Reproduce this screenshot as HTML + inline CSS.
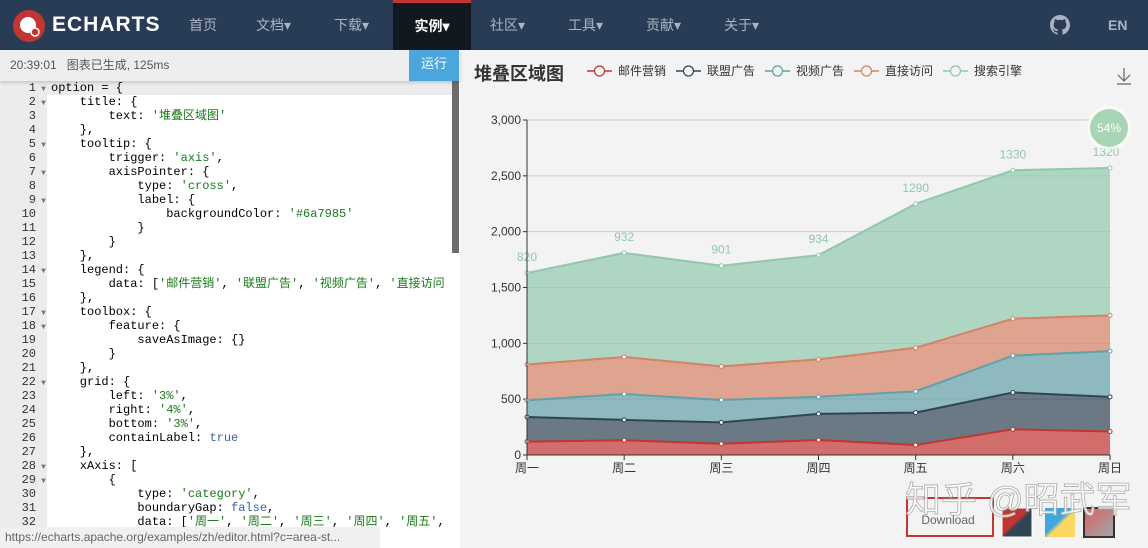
<!DOCTYPE html>
<html><head><meta charset="utf-8">
<style>
*{margin:0;padding:0;box-sizing:border-box}
body{width:1148px;height:548px;overflow:hidden;background:#f3f3f3;font-family:"Liberation Sans","Noto Sans CJK SC",sans-serif;position:relative}
#nav{position:absolute;left:0;top:0;width:1148px;height:50px;background:#293c55;color:#aab3bf;font-size:14px}
#nav .it{position:absolute;top:0;height:50px;line-height:50px}
#nav .act{background:#111820;color:#fff;font-weight:bold;left:393px;width:78px;text-align:center;border-top:3px solid #c23531;line-height:47px}
#left{position:absolute;left:0;top:50px;width:460px;height:498px;background:#fff}
#status{position:absolute;left:0;top:0;width:460px;height:31px;background:#eeeeee;font-size:12px;color:#555;line-height:31px;padding-left:10px;box-shadow:0 2px 3px rgba(0,0,0,.15)}
#run{position:absolute;left:409px;top:0;width:50px;height:31px;background:#4aa6dc;color:#fff;text-align:center;line-height:28px;font-size:13px}
#gut{position:absolute;left:0;top:31px;width:47px;height:467px;background:#ececec}
#code{position:absolute;left:0;top:31px;font-family:"Liberation Mono","Noto Sans CJK SC",monospace;font-size:12px;color:#000;white-space:pre}
#code div{height:14px;line-height:14px;overflow:visible}
.ln{display:inline-block;width:36px;text-align:right;color:#333;padding-right:0}
.ar{display:inline-block;width:15px;color:#777;font-size:8px;text-align:center}
.s{color:#1a7a1a}.b{color:#3a5fa6}
#hl{position:absolute;left:47px;top:31px;width:405px;height:14px;background:#ececec}
#sb{position:absolute;left:452px;top:31px;width:7px;height:172px;background:#6c6c6c}
#url{position:absolute;left:0;top:477px;width:380px;height:21px;background:#f0f0f0;font-size:12px;color:#666;line-height:21px;padding-left:5px}
</style></head><body>
<div id="nav">
<svg style="position:absolute;left:12px;top:9px" width="34" height="34"><circle cx="17" cy="17" r="16" fill="#c23531"/><circle cx="16" cy="16" r="8" fill="#fff"/><circle cx="23" cy="23" r="4" fill="#c23531" stroke="#fff" stroke-width="1.5"/></svg>
<div class="it" style="left:52px;color:#fff;font-size:21px;font-weight:bold;letter-spacing:1px">ECHARTS</div>
<div class="it" style="left:189px">首页</div>
<div class="it" style="left:256px">文档▾</div>
<div class="it" style="left:334px">下载▾</div>
<div class="it act">实例▾</div>
<div class="it" style="left:490px">社区▾</div>
<div class="it" style="left:568px">工具▾</div>
<div class="it" style="left:646px">贡献▾</div>
<div class="it" style="left:724px">关于▾</div>
<svg style="position:absolute;left:1050px;top:15px" width="20" height="20" viewBox="0 0 16 16"><path fill="#aab3bf" d="M8 0C3.58 0 0 3.58 0 8c0 3.540 2.29 6.53 5.47 7.59.4.07.55-.17.55-.38v-1.33c-2.23.48-2.7-1.07-2.7-1.07-.36-.92-.89-1.17-.89-1.17-.73-.5.06-.49.06-.49.8.06 1.23.83 1.23.83.72 1.23 1.87.87 2.330.67.07-.52.28-.87.51-1.07-1.78-.2-3.65-.89-3.65-3.95 0-.87.31-1.59.82-2.15-.08-.2-.36-1.02.08-2.12 0 0 .67-.21 2.2.82a7.6 7.6 0 014 0c1.53-1.04 2.2-.82 2.2-.82.44 1.1.16 1.92.08 2.12.51.56.82 1.27.82 2.15 0 3.07-1.87 3.75-3.65 3.95.29.25.54.73.54 1.48v2.2c0 .21.15.46.55.38A8 8 0 0016 8c0-4.42-3.58-8-8-8z"/></svg>
<div class="it" style="left:1108px;font-weight:bold">EN</div>
</div>
<div id="left">
<div id="gut"></div><div id="hl"></div>
<div id="code"></div>
<div id="sb"></div>
<div id="status">20:39:01 &nbsp; 图表已生成, 125ms</div>
<div id="run">运行</div>
<div id="url">https://echarts.apache.org/examples/zh/editor.html?c=area-st...</div>
</div>
<svg id="ch" style="position:absolute;left:460px;top:50px" width="688" height="498"></svg>
<script>
var L=[[1,1,"option = {"],[2,1,"    title: {"],[3,0,"        text: <s>'堆叠区域图'</s>"],[4,0,"    },"],[5,1,"    tooltip: {"],[6,0,"        trigger: <s>'axis'</s>,"],[7,1,"        axisPointer: {"],[8,0,"            type: <s>'cross'</s>,"],[9,1,"            label: {"],[10,0,"                backgroundColor: <s>'#6a7985'</s>"],[11,0,"            }"],[12,0,"        }"],[13,0,"    },"],[14,1,"    legend: {"],[15,0,"        data: [<s>'邮件营销'</s>, <s>'联盟广告'</s>, <s>'视频广告'</s>, <s>'直接访问</s>"],[16,0,"    },"],[17,1,"    toolbox: {"],[18,1,"        feature: {"],[19,0,"            saveAsImage: {}"],[20,0,"        }"],[21,0,"    },"],[22,1,"    grid: {"],[23,0,"        left: <s>'3%'</s>,"],[24,0,"        right: <s>'4%'</s>,"],[25,0,"        bottom: <s>'3%'</s>,"],[26,0,"        containLabel: <b>true</b>"],[27,0,"    },"],[28,1,"    xAxis: ["],[29,1,"        {"],[30,0,"            type: <s>'category'</s>,"],[31,0,"            boundaryGap: <b>false</b>,"],[32,0,"            data: [<s>'周一'</s>, <s>'周二'</s>, <s>'周三'</s>, <s>'周四'</s>, <s>'周五'</s>,"]];
var h="";L.forEach(function(l){h+='<div><span class="ln">'+l[0]+'</span><span class="ar">'+(l[1]?'▼':'')+'</span>'+l[2].replace(/<s>/g,'<span class="s">').replace(/<\/s>/g,'</span>').replace(/<b>/g,'<span class="b">').replace(/<\/b>/g,'</span>')+"</div>";});
document.getElementById('code').innerHTML=h;
var d=[[120,132,101,134,90,230,210],[220,182,191,234,290,330,310],[150,232,201,154,190,330,410],[320,332,301,334,390,330,320],[820,932,901,934,1290,1330,1320]];
var col=['#c23531','#2f4554','#61a0a8','#d48265','#91c7ae'];
var ox=67,oy=405,sy=335/3000,st=97.17;
var s='';
for(var v=0;v<=3000;v+=500){var y=oy-v*sy;if(v)s+='<line x1="'+ox+'" x2="650" y1="'+y+'" y2="'+y+'" stroke="#ccc"/>';s+='<text x="'+(ox-6)+'" y="'+(y+4)+'" font-size="12" fill="#333" text-anchor="end">'+v.toLocaleString('en')+'</text><line x1="'+(ox-4)+'" x2="'+ox+'" y1="'+y+'" y2="'+y+'" stroke="#333"/>';}
var cum=[0,0,0,0,0,0,0],prev;
var pts=function(a){return a.map(function(v,i){return (ox+i*st)+','+(oy-v*sy)}).join(' ')};
var lines='';
d.forEach(function(sr,k){prev=cum.slice();cum=cum.map(function(c,i){return c+sr[i]});
var top=pts(cum),bot=prev.map(function(v,i){return (ox+i*st)+','+(oy-v*sy)}).reverse().join(' ');
s+='<polygon points="'+top+' '+bot+'" fill="'+col[k]+'" fill-opacity="0.7"/>';
lines+='<polyline points="'+top+'" fill="none" stroke="'+col[k]+'" stroke-width="2"/>';
cum.forEach(function(v,i){lines+='<circle cx="'+(ox+i*st)+'" cy="'+(oy-v*sy)+'" r="2" fill="#fff" stroke="'+col[k]+'"/>';if(k==4)lines+='<text x="'+(ox+i*st-(i==6?4:0))+'" y="'+(oy-v*sy-12)+'" font-size="12" fill="#91c7ae" text-anchor="middle">'+sr[i]+'</text>';});});
s+=lines;
s+='<line x1="'+ox+'" x2="'+ox+'" y1="70" y2="'+oy+'" stroke="#333"/><line x1="'+ox+'" x2="650" y1="'+oy+'" y2="'+oy+'" stroke="#333"/>';
['周一','周二','周三','周四','周五','周六','周日'].forEach(function(t,i){var x=ox+i*st;s+='<line x1="'+x+'" x2="'+x+'" y1="'+oy+'" y2="'+(oy+5)+'" stroke="#333"/><text x="'+x+'" y="'+(oy+17)+'" font-size="12" fill="#333" text-anchor="middle">'+t+'</text>';});
s+='<text x="14" y="30" font-size="18" font-weight="bold" fill="#333">堆叠区域图</text>';
var ln=['邮件营销','联盟广告','视频广告','直接访问','搜索引擎'],lx=[127,216,305,394,483];
ln.forEach(function(t,i){var x=lx[i];s+='<line x1="'+x+'" x2="'+(x+25)+'" y1="21" y2="21" stroke="'+col[i]+'" stroke-width="1.5"/><circle cx="'+(x+12.5)+'" cy="21" r="5" fill="#f3f3f3" stroke="'+col[i]+'" stroke-width="1.2"/><text x="'+(x+31)+'" y="25" font-size="12" fill="#333">'+t+'</text>';});
s+='<path d="M664 18v13M658 25l6 6 6-6M657 34h14" stroke="#666" fill="none" stroke-width="1.2"/>';
s+='<circle cx="649" cy="78" r="22" fill="#fff" opacity=".6"/><circle cx="649" cy="78" r="19" fill="#a8d6b5"/><text x="649" y="82" font-size="12" fill="#fff" text-anchor="middle">54%</text>';
s+='<rect x="447" y="448" width="86" height="38" fill="#f3f3f3" stroke="#c23531" stroke-width="2"/><text x="488" y="474" font-size="12" fill="#666" text-anchor="middle">Download</text>';
s+='<defs><linearGradient id="g1" x1="0" y1="0" x2="1" y2="1"><stop offset=".45" stop-color="#c23531"/><stop offset=".55" stop-color="#2f4554"/></linearGradient><linearGradient id="g2" x1="0" y1="0" x2="1" y2="1"><stop offset=".45" stop-color="#3fa7dc"/><stop offset=".55" stop-color="#fad860"/></linearGradient><linearGradient id="g3" x1="0" y1="0" x2="1" y2="1"><stop offset="0" stop-color="#e06060"/><stop offset="1" stop-color="#9aa"/></linearGradient></defs>';
s+='<rect x="542" y="458" width="30" height="29" fill="url(#g1)" stroke="#fff"/><rect x="585" y="458" width="30" height="29" fill="url(#g2)"/><rect x="624" y="458" width="30" height="29" fill="url(#g3)" stroke="#333" stroke-width="2"/>';
s+='<text x="445" y="462" font-size="36" fill="#fff" fill-opacity=".8" stroke="#aaa" stroke-width=".8">知乎 @昭武军</text>';
document.getElementById('ch').innerHTML=s;
</script>
</body></html>
